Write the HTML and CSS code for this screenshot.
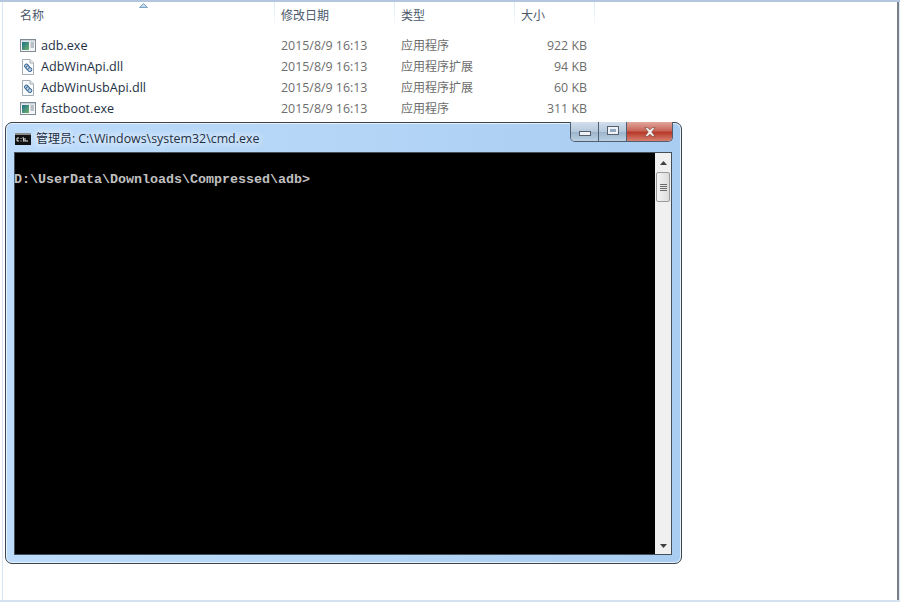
FILE: index.html
```html
<!DOCTYPE html>
<html lang="zh-CN">
<head>
<meta charset="utf-8">
<title>adb</title>
<link rel="stylesheet" href="styles.css">
</head>
<body>
<div class="explorer">
  <div class="header">
    <div class="col c-name">名称<svg class="sort" width="9" height="5" viewBox="0 0 9 5"><path d="M4.500 0.500L8.500 4.500H0.500Z" fill="#c5dcef" stroke="#7da2c4" stroke-width="1"/></svg></div>
    <div class="col c-date">修改日期</div>
    <div class="col c-type">类型</div>
    <div class="col c-size">大小</div>
  </div>
  <div class="rows">
    <div class="row">
      <div class="cell c-name file"><svg class="ico" width="16" height="14" viewBox="0 0 16 14"><use href="#exe"/></svg>adb.exe</div>
      <div class="cell c-date">2015/8/9 16:13</div><div class="cell c-type">应用程序</div><div class="cell c-size num">922 KB</div>
    </div>
    <div class="row">
      <div class="cell c-name file"><svg class="ico" width="16" height="16" viewBox="0 0 16 16"><use href="#dll"/></svg>AdbWinApi.dll</div>
      <div class="cell c-date">2015/8/9 16:13</div><div class="cell c-type">应用程序扩展</div><div class="cell c-size num">94 KB</div>
    </div>
    <div class="row">
      <div class="cell c-name file"><svg class="ico" width="16" height="16" viewBox="0 0 16 16"><use href="#dll"/></svg>AdbWinUsbApi.dll</div>
      <div class="cell c-date">2015/8/9 16:13</div><div class="cell c-type">应用程序扩展</div><div class="cell c-size num">60 KB</div>
    </div>
    <div class="row">
      <div class="cell c-name file"><svg class="ico" width="16" height="14" viewBox="0 0 16 14"><use href="#exe"/></svg>fastboot.exe</div>
      <div class="cell c-date">2015/8/9 16:13</div><div class="cell c-type">应用程序</div><div class="cell c-size num">311 KB</div>
    </div>
  </div>
</div>

<div class="cmd">
  <div class="titlebar">
    <svg class="cmd-ico" width="16" height="12" viewBox="0 0 16 12"><rect x="0" y="0" width="16" height="12" fill="#111"/><rect x="0" y="0" width="16" height="2" fill="#8a8a8a"/><path d="M2 5H4M2 5V8M2 8H4M6 5V5.900M6 7.500V8.500M8 4L9 9M10 5V8M10 8H13" stroke="#e8e8e8" stroke-width="1" fill="none"/></svg>
    <span class="title">管理员: <span class="title-path">C:\Windows\system32\cmd.exe</span></span>
    <div class="controls">
      <div class="btn b-min"><span class="min-glyph"></span></div>
      <div class="btn b-max"><span class="max-glyph"></span></div>
      <div class="btn b-close"><svg width="12" height="10" viewBox="0 0 14 11"><path d="M1 0.500H4.500L7 3L9.500 0.500H13L9 5.500L13 10.500H9.500L7 8L4.500 10.500H1L5 5.500Z" fill="#f4f0ee" stroke="#6e4038" stroke-width="0.700"/></svg></div>
    </div>
  </div>
  <div class="client">
    <pre class="console">D:\UserData\Downloads\Compressed\adb&gt;</pre>
    <div class="scrollbar">
      <svg class="arrow" width="7" height="4" viewBox="0 0 7 4"><path d="M3.500 0L7 4H0Z" fill="#404040"/></svg>
      <div class="thumb"><span></span><span></span><span></span><span></span></div>
      <svg class="arrow arrow-down" width="7" height="4" viewBox="0 0 7 4"><path d="M0 0H7L3.500 4Z" fill="#404040"/></svg>
    </div>
  </div>
</div>

<svg class="defs" width="0" height="0">
  <defs>
    <linearGradient id="g" x1="0" y1="0" x2="1" y2="1"><stop offset="0" stop-color="#1f6f8f"/><stop offset="1" stop-color="#6fb36a"/></linearGradient>
    <symbol id="exe" viewBox="0 0 16 14">
      <rect x="0.500" y="0.500" width="15" height="12" fill="#f4f6f8" stroke="#7e8a94"/>
      <rect x="1" y="1" width="14" height="1.500" fill="#c9d3dc"/>
      <rect x="2" y="3" width="7" height="8" fill="url(#g)"/>
      <path d="M10.500 4H14M10.500 6H14M10.500 8H14" stroke="#7e8a94"/>
    </symbol>
    <symbol id="dll" viewBox="0 0 16 16">
      <path d="M2.500 0.500H10L13.500 4V15.500H2.500Z" fill="#fbfcfd" stroke="#a3adb6"/>
      <path d="M10 0.500V4H13.500" fill="#e6ebef" stroke="#a3adb6"/>
      <circle cx="6.500" cy="7" r="2" fill="#bcd2e6" stroke="#2f5f90"/>
      <circle cx="8" cy="8.800" r="2" fill="#d6e4f0" stroke="#2f5f90"/>
      <circle cx="9.800" cy="10.600" r="2" fill="#bcd2e6" stroke="#2f5f90"/>
    </symbol>
  </defs>
</svg>
</body>
</html>
```
FILE: styles.css
```css
html, body { margin: 0; padding: 0; }
body {
  width: 900px;
  height: 602px;
  position: relative;
  overflow: hidden;
  background: #fff;
  font-family: "Open Sans", "Noto Sans CJK SC", sans-serif;
}
.explorer {
  box-sizing: border-box;
  height: 602px;
  padding-left: 5px;
  border-top: 2px solid #b3c6de;
  border-bottom: 2px solid #d5e3f1;
  background: linear-gradient(to right, #fff 0, #fff 2px, #d6e4f3 2px, #d6e4f3 3px, #fff 3px);
  box-shadow: inset -1px 0 0 #dfe9f3, inset -3px 0 0 #7a8086;
}
.header { display: flex; height: 24px; }
.col {
  box-sizing: border-box;
  font-size: 12px;
  line-height: 28px;
  color: #4c5a6c;
  background: linear-gradient(to bottom, #dbe9f6, #f8fbfe) right top / 1px 100% no-repeat;
  position: relative;
}
.c-name { width: 270px; padding-left: 15px; flex: none; }
.c-date { width: 120px; padding-left: 6px; flex: none; }
.c-type { width: 120px; padding-left: 6px; flex: none; }
.c-size { width: 80px; padding-left: 6px; flex: none; }
.sort { position: absolute; left: 134px; top: 1px; }
.rows { padding-top: 9px; }
.row { display: flex; height: 21px; align-items: center; }
.cell { box-sizing: border-box; font-size: 12.4px; line-height: 21px; color: #6d6d6d; white-space: nowrap; }
.c-type.cell { font-size: 12px; }
.file { color: #1e2f45; font-size: 12.6px; display: flex; align-items: center; padding-left: 15px; }
.ico { width: 16px; margin-right: 5px; flex: none; }
.num { text-align: right; padding: 0 8px 0 0; }
.defs { position: absolute; }

.cmd {
  position: absolute;
  left: 5px;
  top: 122px;
  width: 677px;
  height: 442px;
  box-sizing: border-box;
  border: 1px solid #3b444c;
  border-radius: 7px;
  background: linear-gradient(to right, #bddcfb 0, #b4d5f6 50%, #a9cdf0 100%);
  box-shadow: inset 0 0 0 1px #e6f1fb;
  display: flex;
  flex-direction: column;
  padding: 0 9px 8px 8px;
}
.titlebar { height: 29px; flex: none; display: flex; align-items: center; position: relative; }
.cmd-ico { flex: none; margin: 2px 5px 0 1px; }
.title { font-size: 12px; color: #1e2f45; white-space: nowrap; margin-top: 1px; text-shadow: 0 0 6px #fff, 0 0 10px rgba(255, 255, 255, 0.8); }
.title-path { font-size: 12.4px; }
.controls {
  position: absolute;
  right: -1px;
  top: -1px;
  display: flex;
  height: 19px;
  border: 1px solid #4f5f70;
  border-top: 0;
  border-radius: 0 0 5px 5px;
  overflow: hidden;
}
.btn { display: flex; align-items: center; justify-content: center; height: 19px; }
.b-min { width: 27px; background: linear-gradient(to bottom, #d3dfec, #b5c8dc 50%, #9db5cc 55%, #bcd0e3); border-right: 1px solid #4f5f70; }
.b-max { width: 27px; background: linear-gradient(to bottom, #d3dfec, #b5c8dc 50%, #9db5cc 55%, #bcd0e3); border-right: 1px solid #4f5f70; }
.b-close { width: 45px; background: linear-gradient(to bottom, #e2a69c, #c9665a 45%, #b73a2a 55%, #d88070); }
.min-glyph { display: block; width: 10px; height: 3px; margin-top: 3px; background: #eef1f5; border: 1px solid #55606c; }
.max-glyph { display: block; width: 6px; height: 3px; margin-top: -2px; background: #93a9bf; border: 2px solid #eef1f5; outline: 1px solid #55606c; }
.client { flex: 1; display: flex; min-height: 0; border: 1px solid #43505c; }
.console {
  flex: 1;
  margin: 0;
  padding-top: 21px;
  text-indent: -1px;
  background: #000;
  color: #c0c0c0;
  font-family: "Liberation Mono", monospace;
  font-weight: bold;
  font-size: 13.33px;
  line-height: 12px;
}
.scrollbar {
  width: 16px;
  flex: none;
  background: #f0f0f0;
  display: flex;
  flex-direction: column;
  align-items: center;
}
.arrow { margin-top: 8px; flex: none; }
.arrow-down { margin: auto 0 6px; }
.thumb {
  box-sizing: border-box;
  width: 14px;
  height: 30px;
  margin-top: 7px;
  border: 1px solid #9a9a9a;
  border-radius: 2px;
  background: linear-gradient(to right, #f4f4f4, #dcdcdc);
  display: flex;
  flex-direction: column;
  justify-content: center;
  align-items: center;
  gap: 1px;
}
.thumb span { display: block; width: 7px; height: 1px; background: #6b6b6b; }
```
